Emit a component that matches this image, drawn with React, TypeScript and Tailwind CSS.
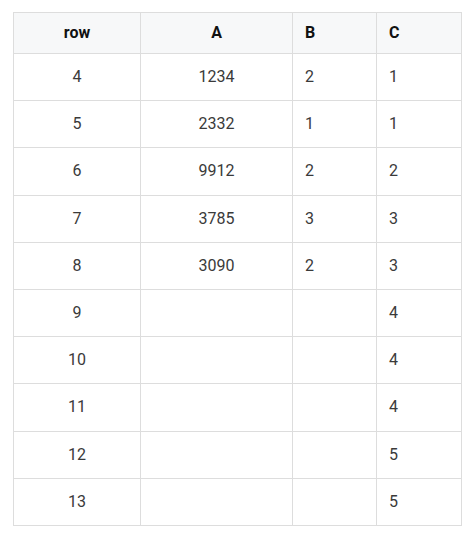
const rows: [number, string, string, string][] = [
  [4, '1234', '2', '1'],
  [5, '2332', '1', '1'],
  [6, '9912', '2', '2'],
  [7, '3785', '3', '3'],
  [8, '3090', '2', '3'],
  [9, '', '', '4'],
  [10, '', '', '4'],
  [11, '', '', '4'],
  [12, '', '', '5'],
  [13, '', '', '5'],
];

export default function App() {
  return (
    <div className="min-h-[537px] bg-white pt-[12px] pl-[13px]" style={{ fontFamily: 'Roboto, "Liberation Sans", sans-serif' }}>
      <table className="border-collapse table-fixed w-[448px] text-[16px] text-[#3a3a3a]">
        <colgroup>
          <col className="w-[127px]" />
          <col className="w-[152px]" />
          <col className="w-[84px]" />
          <col className="w-[85px]" />
        </colgroup>
        <thead>
          <tr className="h-[41px] bg-[#f7f8f9] text-[16px] font-bold text-[#111]">
            <th className="border border-[#dddddd] text-center">row</th>
            <th className="border border-[#dddddd] text-center">A</th>
            <th className="border border-[#dddddd] text-left px-3">B</th>
            <th className="border border-[#dddddd] text-left px-3">C</th>
          </tr>
        </thead>
        <tbody>
          {rows.map(([n, a, b, c]) => (
            <tr key={n} className="h-[47.2px]">
              <td className="border border-[#dddddd] text-center">{n}</td>
              <td className="border border-[#dddddd] text-center">{a}</td>
              <td className="border border-[#dddddd] text-left px-3">{b}</td>
              <td className="border border-[#dddddd] text-left px-3">{c}</td>
            </tr>
          ))}
        </tbody>
      </table>
    </div>
  );
}
